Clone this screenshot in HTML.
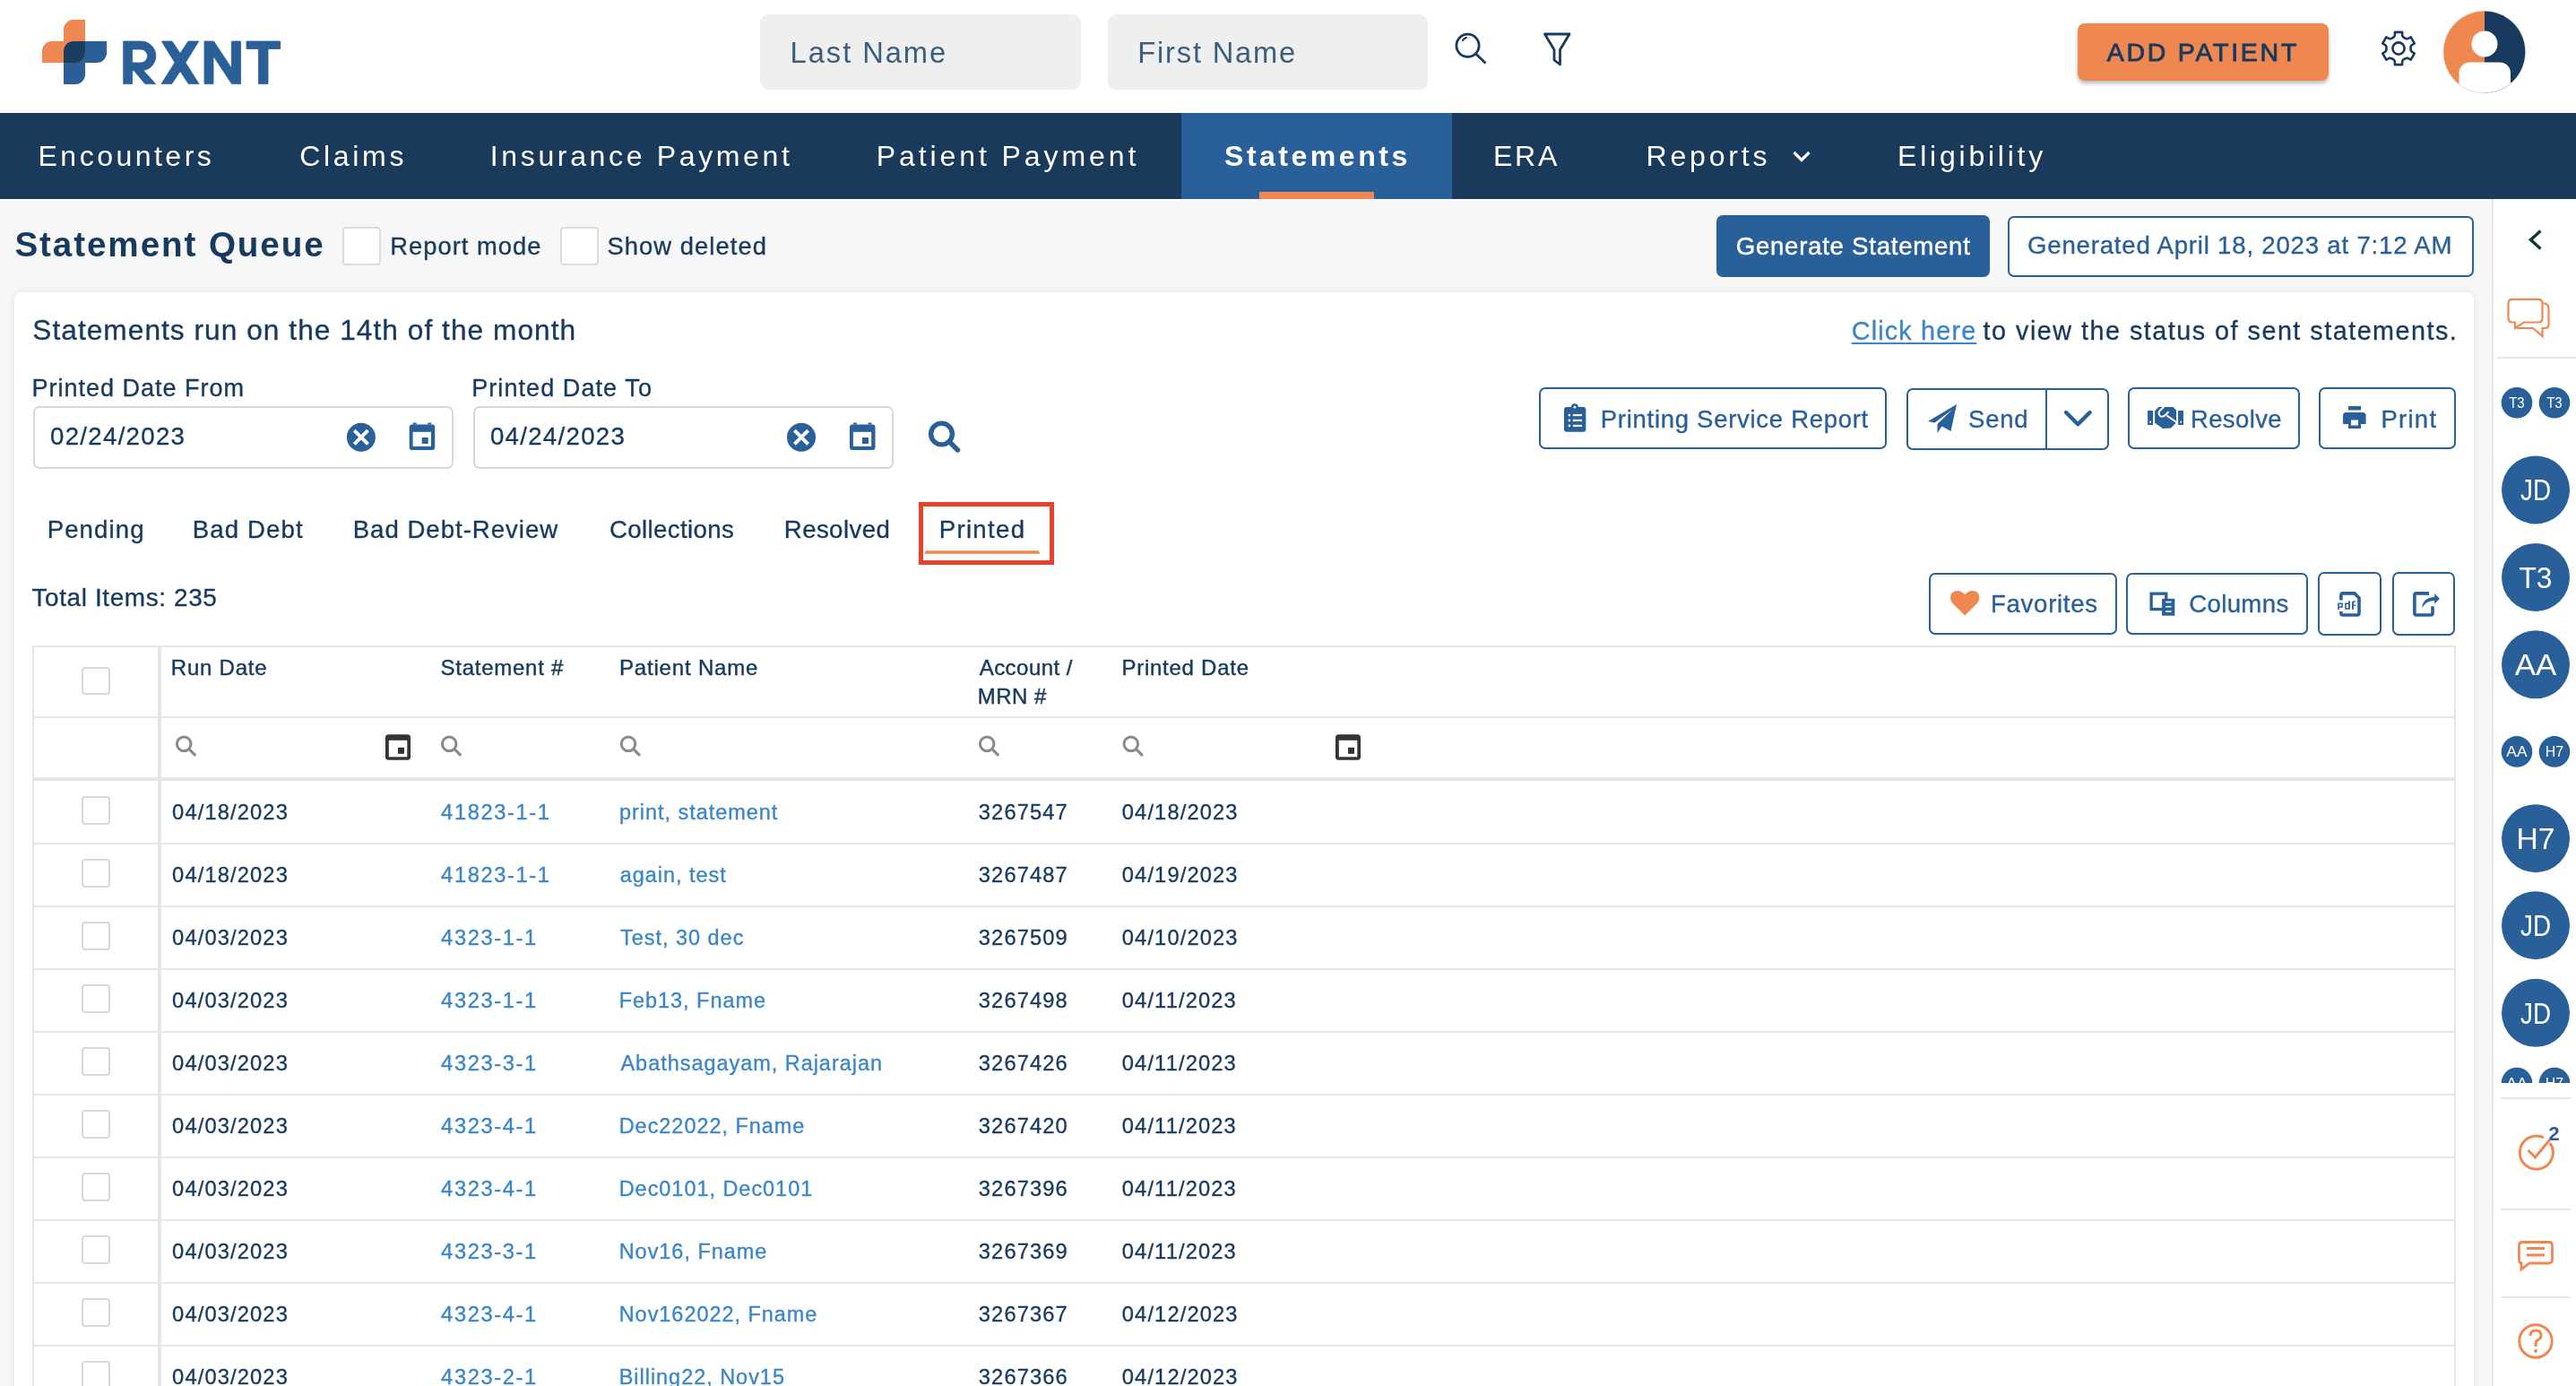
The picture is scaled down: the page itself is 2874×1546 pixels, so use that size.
<!DOCTYPE html>
<html><head><meta charset="utf-8"><style>
html,body{margin:0;padding:0;}
body{width:2874px;height:1546px;overflow:hidden;position:relative;background:#fff;font-family:"Liberation Sans",sans-serif;}
.t{position:absolute;white-space:pre;line-height:1;}
#root{position:absolute;left:0;top:0;width:2874px;height:1546px;will-change:transform;}
div{position:absolute;}
svg{position:absolute;left:0;top:0;}
</style></head><body><div id="root">
<div style="position:absolute;left:848px;top:16px;width:358px;height:84px;background:#efefef;border-radius:9px;"></div>
<div style="position:absolute;left:1236px;top:16px;width:357px;height:84px;background:#efefef;border-radius:9px;"></div>
<div class="t" style="left:881.6px;top:42.5px;font-size:32.65px;color:#3b5e7e;letter-spacing:1.97px;/*nostroke*/">Last Name</div>
<div class="t" style="left:1269.2px;top:42.5px;font-size:32.65px;color:#3b5e7e;letter-spacing:1.83px;/*nostroke*/">First Name</div>
<div style="position:absolute;left:2318px;top:26px;width:280px;height:64px;background:#ef8751;border-radius:8px;box-shadow:0 3px 4px rgba(0,0,0,0.28);"></div>
<div class="t" style="left:2350.8px;top:43.9px;font-size:28.49px;color:#173a5e;letter-spacing:2.74px;-webkit-text-stroke:0.9px #173a5e;">ADD PATIENT</div>
<div style="position:absolute;left:0px;top:126px;width:2874px;height:96px;background:#193a5b;"></div>
<div style="position:absolute;left:1318px;top:126px;width:302px;height:96px;background:#2a6099;"></div>
<div style="position:absolute;left:1405px;top:214px;width:128px;height:8px;background:#ef8751;"></div>
<div class="t" style="left:42.5px;top:158.0px;font-size:32.09px;color:#ffffff;letter-spacing:3.45px;">Encounters</div>
<div class="t" style="left:334.3px;top:158.0px;font-size:32.09px;color:#ffffff;letter-spacing:3.63px;">Claims</div>
<div class="t" style="left:546.8px;top:158.0px;font-size:32.09px;color:#ffffff;letter-spacing:3.61px;">Insurance Payment</div>
<div class="t" style="left:977.8px;top:158.0px;font-size:32.09px;color:#ffffff;letter-spacing:3.87px;">Patient Payment</div>
<div class="t" style="left:1366.0px;top:158.0px;font-size:32.09px;color:#ffffff;font-weight:bold;letter-spacing:3.48px;">Statements</div>
<div class="t" style="left:1666.0px;top:158.0px;font-size:32.09px;color:#ffffff;letter-spacing:2.68px;">ERA</div>
<div class="t" style="left:1836.4px;top:158.0px;font-size:32.09px;color:#ffffff;letter-spacing:3.82px;">Reports</div>
<div class="t" style="left:2117.1px;top:158.0px;font-size:32.09px;color:#ffffff;letter-spacing:3.74px;">Eligibility</div>
<div style="position:absolute;left:0px;top:222px;width:2780px;height:1324px;background:#f7f7f7;z-index:-1;"></div>
<div style="position:absolute;left:2780px;top:222px;width:2px;height:1324px;background:#e6e6e6;"></div>
<div style="position:absolute;left:2782px;top:222px;width:92px;height:1324px;background:#fff;"></div>
<div class="t" style="left:16.4px;top:253.9px;font-size:38.66px;color:#173a5e;font-weight:bold;letter-spacing:1.89px;">Statement Queue</div>
<div style="position:absolute;left:382px;top:253px;width:43px;height:43px;background:#fff;border:2px solid #dcdcdc;border-radius:4px;box-sizing:border-box;"></div>
<div class="t" style="left:435.2px;top:261.4px;font-size:27.35px;color:#173a5e;-webkit-text-stroke:0.35px #173a5e;letter-spacing:1.03px;">Report mode</div>
<div style="position:absolute;left:625px;top:253px;width:43px;height:43px;background:#fff;border:2px solid #dcdcdc;border-radius:4px;box-sizing:border-box;"></div>
<div class="t" style="left:677.5px;top:261.4px;font-size:27.35px;color:#173a5e;-webkit-text-stroke:0.35px #173a5e;letter-spacing:1.06px;">Show deleted</div>
<div style="position:absolute;left:1915px;top:240px;width:305px;height:69px;background:#2a6099;border-radius:7px;"></div>
<div class="t" style="left:1936.7px;top:260.6px;font-size:27.63px;color:#fff;letter-spacing:0.73px;-webkit-text-stroke:0.45px #fff;">Generate Statement</div>
<div style="position:absolute;left:2240px;top:240.5px;width:520px;height:68px;background:#fff;border:2px solid #2a6099;border-radius:7px;box-sizing:border-box;"></div>
<div class="t" style="left:2262.0px;top:260.3px;font-size:27.63px;color:#2a6099;-webkit-text-stroke:0.35px #2a6099;letter-spacing:0.78px;">Generated April 18, 2023 at 7:12 AM</div>
<div style="position:absolute;left:16px;top:326px;width:2744px;height:1300px;background:#fff;border-radius:8px;box-shadow:0 0 10px rgba(0,0,0,0.09);"></div>
<div class="t" style="left:36.3px;top:352.9px;font-size:31.67px;color:#173a5e;-webkit-text-stroke:0.35px #173a5e;letter-spacing:1.03px;">Statements run on the 14th of the month</div>
<div class="t" style="left:2065.7px;top:354.7px;font-size:28.74px;color:#3a86c8;-webkit-text-stroke:0.35px #3a86c8;letter-spacing:1.19px;text-decoration:underline;text-decoration-thickness:2px;text-underline-offset:3px;">Click here</div>
<div class="t" style="left:2212.6px;top:354.7px;font-size:28.74px;color:#173a5e;-webkit-text-stroke:0.35px #173a5e;letter-spacing:1.50px;">to view the status of sent statements.</div>
<div class="t" style="left:35.4px;top:418.8px;font-size:27.07px;color:#173a5e;-webkit-text-stroke:0.35px #173a5e;letter-spacing:0.98px;">Printed Date From</div>
<div class="t" style="left:526.2px;top:418.8px;font-size:27.07px;color:#173a5e;-webkit-text-stroke:0.35px #173a5e;letter-spacing:1.05px;">Printed Date To</div>
<div style="position:absolute;left:36.5px;top:452.5px;width:469.7px;height:70.5px;background:#fff;border:2px solid #d8d8d8;border-radius:7px;box-sizing:border-box;"></div>
<div class="t" style="left:56.0px;top:473.1px;font-size:27.63px;color:#173a5e;-webkit-text-stroke:0.35px #173a5e;letter-spacing:1.30px;">02/24/2023</div>
<div style="position:absolute;left:527.9px;top:452.5px;width:469.30000000000007px;height:70.5px;background:#fff;border:2px solid #d8d8d8;border-radius:7px;box-sizing:border-box;"></div>
<div class="t" style="left:546.9px;top:473.1px;font-size:27.63px;color:#173a5e;-webkit-text-stroke:0.35px #173a5e;letter-spacing:1.30px;">04/24/2023</div>
<div style="position:absolute;left:1717.4px;top:432.3px;width:387.9000000000001px;height:69.19999999999999px;background:#fff;border:2px solid #2a6099;border-radius:7px;box-sizing:border-box;"></div>
<div class="t" style="left:1785.8px;top:453.6px;font-size:27.49px;color:#2a6099;-webkit-text-stroke:0.35px #2a6099;letter-spacing:0.72px;">Printing Service Report</div>
<div style="position:absolute;left:2126.6px;top:433.3px;width:226.70000000000027px;height:69.19999999999999px;background:#fff;border:2px solid #2a6099;border-radius:7px;box-sizing:border-box;"></div>
<div style="position:absolute;left:2282px;top:433.3px;width:2px;height:69.2px;background:#2a6099;"></div>
<div class="t" style="left:2196.1px;top:453.6px;font-size:27.49px;color:#2a6099;-webkit-text-stroke:0.35px #2a6099;letter-spacing:0.73px;">Send</div>
<div style="position:absolute;left:2374.2px;top:432.2px;width:192.30000000000018px;height:69.30000000000001px;background:#fff;border:2px solid #2a6099;border-radius:7px;box-sizing:border-box;"></div>
<div class="t" style="left:2443.9px;top:453.6px;font-size:27.49px;color:#2a6099;-webkit-text-stroke:0.35px #2a6099;letter-spacing:0.41px;">Resolve</div>
<div style="position:absolute;left:2587px;top:432.2px;width:152.80000000000018px;height:69.30000000000001px;background:#fff;border:2px solid #2a6099;border-radius:7px;box-sizing:border-box;"></div>
<div class="t" style="left:2656.4px;top:453.6px;font-size:27.49px;color:#2a6099;-webkit-text-stroke:0.35px #2a6099;letter-spacing:1.28px;">Print</div>
<div class="t" style="left:52.7px;top:577.3px;font-size:27.63px;color:#173a5e;-webkit-text-stroke:0.35px #173a5e;letter-spacing:1.07px;">Pending</div>
<div class="t" style="left:214.8px;top:577.3px;font-size:27.63px;color:#173a5e;-webkit-text-stroke:0.35px #173a5e;letter-spacing:1.10px;">Bad Debt</div>
<div class="t" style="left:393.7px;top:577.3px;font-size:27.63px;color:#173a5e;-webkit-text-stroke:0.35px #173a5e;letter-spacing:0.97px;">Bad Debt-Review</div>
<div class="t" style="left:679.9px;top:577.3px;font-size:27.63px;color:#173a5e;-webkit-text-stroke:0.35px #173a5e;letter-spacing:0.38px;">Collections</div>
<div class="t" style="left:874.8px;top:577.3px;font-size:27.63px;color:#173a5e;-webkit-text-stroke:0.35px #173a5e;letter-spacing:0.40px;">Resolved</div>
<div class="t" style="left:1047.7px;top:577.3px;font-size:27.63px;color:#173a5e;-webkit-text-stroke:0.35px #173a5e;letter-spacing:1.30px;">Printed</div>
<div style="position:absolute;left:1025.2px;top:559.9px;width:150.6px;height:69.7px;border:5px solid #e8412a;box-sizing:border-box;"></div>
<div class="t" style="left:35.5px;top:653.1px;font-size:27.91px;color:#173a5e;-webkit-text-stroke:0.35px #173a5e;letter-spacing:0.62px;">Total Items: 235</div>
<div style="position:absolute;left:2152.4px;top:639.4px;width:209.19999999999982px;height:68.89999999999998px;background:#fff;border:2px solid #2a6099;border-radius:7px;box-sizing:border-box;"></div>
<div class="t" style="left:2221.0px;top:660.0px;font-size:27.63px;color:#2a6099;-webkit-text-stroke:0.35px #2a6099;letter-spacing:0.68px;">Favorites</div>
<div style="position:absolute;left:2372.2px;top:639.4px;width:202.5px;height:68.89999999999998px;background:#fff;border:2px solid #2a6099;border-radius:7px;box-sizing:border-box;"></div>
<div class="t" style="left:2442.2px;top:660.0px;font-size:27.63px;color:#2a6099;-webkit-text-stroke:0.35px #2a6099;letter-spacing:0.34px;">Columns</div>
<div style="position:absolute;left:2586.4px;top:638.2px;width:70.79999999999973px;height:70.79999999999995px;background:#fff;border:2px solid #2a6099;border-radius:7px;box-sizing:border-box;"></div>
<div style="position:absolute;left:2668.6px;top:638.2px;width:70.80000000000018px;height:70.79999999999995px;background:#fff;border:2px solid #2a6099;border-radius:7px;box-sizing:border-box;"></div>
<div style="position:absolute;left:36px;top:720px;width:2704px;height:826px;background:#fff;border:2px solid #e6e6e6;border-bottom:none;box-sizing:border-box;"></div>
<div style="position:absolute;left:176px;top:720px;width:4px;height:826px;background:#e6e6e6;"></div>
<div style="position:absolute;left:36px;top:799px;width:2704px;height:2px;background:#e6e6e6;"></div>
<div style="position:absolute;left:36px;top:867px;width:2704px;height:4px;background:#e6e6e6;"></div>
<div style="position:absolute;left:36px;top:940px;width:2704px;height:2px;background:#e6e6e6;"></div>
<div style="position:absolute;left:36px;top:1010px;width:2704px;height:2px;background:#e6e6e6;"></div>
<div style="position:absolute;left:36px;top:1080px;width:2704px;height:2px;background:#e6e6e6;"></div>
<div style="position:absolute;left:36px;top:1150px;width:2704px;height:2px;background:#e6e6e6;"></div>
<div style="position:absolute;left:36px;top:1220px;width:2704px;height:2px;background:#e6e6e6;"></div>
<div style="position:absolute;left:36px;top:1290px;width:2704px;height:2px;background:#e6e6e6;"></div>
<div style="position:absolute;left:36px;top:1360px;width:2704px;height:2px;background:#e6e6e6;"></div>
<div style="position:absolute;left:36px;top:1430px;width:2704px;height:2px;background:#e6e6e6;"></div>
<div style="position:absolute;left:36px;top:1500px;width:2704px;height:2px;background:#e6e6e6;"></div>
<div style="position:absolute;left:91.4px;top:743.5px;width:31.2px;height:31.2px;background:#fff;border:2px solid #d9d9d9;border-radius:4px;box-sizing:border-box;"></div>
<div class="t" style="left:190.8px;top:732.9px;font-size:24.00px;color:#173a5e;letter-spacing:0.77px;-webkit-text-stroke:0.45px #173a5e;">Run Date</div>
<div class="t" style="left:491.6px;top:732.9px;font-size:24.00px;color:#173a5e;letter-spacing:0.73px;-webkit-text-stroke:0.45px #173a5e;">Statement #</div>
<div class="t" style="left:690.9px;top:732.9px;font-size:24.00px;color:#173a5e;letter-spacing:0.83px;-webkit-text-stroke:0.45px #173a5e;">Patient Name</div>
<div class="t" style="left:1092.7px;top:732.9px;font-size:24.00px;color:#173a5e;letter-spacing:0.46px;-webkit-text-stroke:0.45px #173a5e;">Account /</div>
<div class="t" style="left:1090.8px;top:764.9px;font-size:24.00px;color:#173a5e;letter-spacing:0.49px;-webkit-text-stroke:0.45px #173a5e;">MRN #</div>
<div class="t" style="left:1251.4px;top:732.9px;font-size:24.00px;color:#173a5e;letter-spacing:0.75px;-webkit-text-stroke:0.45px #173a5e;">Printed Date</div>
<div style="position:absolute;left:91.4px;top:888.4px;width:31.2px;height:31.2px;background:#fff;border:2px solid #d9d9d9;border-radius:4px;box-sizing:border-box;"></div>
<div class="t" style="left:192.1px;top:894.7px;font-size:23.69px;color:#173a5e;-webkit-text-stroke:0.35px #173a5e;letter-spacing:1.13px;">04/18/2023</div>
<div class="t" style="left:492.1px;top:894.7px;font-size:23.69px;color:#3a86c8;-webkit-text-stroke:0.35px #3a86c8;letter-spacing:1.62px;">41823-1-1</div>
<div class="t" style="left:691.0px;top:894.9px;font-size:23.44px;color:#3a86c8;-webkit-text-stroke:0.35px #3a86c8;letter-spacing:0.99px;">print, statement</div>
<div class="t" style="left:1091.8px;top:894.7px;font-size:23.69px;color:#173a5e;-webkit-text-stroke:0.35px #173a5e;letter-spacing:1.13px;">3267547</div>
<div class="t" style="left:1251.8px;top:894.7px;font-size:23.69px;color:#173a5e;-webkit-text-stroke:0.35px #173a5e;letter-spacing:1.13px;">04/18/2023</div>
<div style="position:absolute;left:91.4px;top:958.4px;width:31.2px;height:31.2px;background:#fff;border:2px solid #d9d9d9;border-radius:4px;box-sizing:border-box;"></div>
<div class="t" style="left:192.1px;top:964.7px;font-size:23.69px;color:#173a5e;-webkit-text-stroke:0.35px #173a5e;letter-spacing:1.13px;">04/18/2023</div>
<div class="t" style="left:492.1px;top:964.7px;font-size:23.69px;color:#3a86c8;-webkit-text-stroke:0.35px #3a86c8;letter-spacing:1.62px;">41823-1-1</div>
<div class="t" style="left:691.8px;top:964.9px;font-size:23.44px;color:#3a86c8;-webkit-text-stroke:0.35px #3a86c8;letter-spacing:0.99px;">again, test</div>
<div class="t" style="left:1091.8px;top:964.7px;font-size:23.69px;color:#173a5e;-webkit-text-stroke:0.35px #173a5e;letter-spacing:1.13px;">3267487</div>
<div class="t" style="left:1251.8px;top:964.7px;font-size:23.69px;color:#173a5e;-webkit-text-stroke:0.35px #173a5e;letter-spacing:1.13px;">04/19/2023</div>
<div style="position:absolute;left:91.4px;top:1028.4px;width:31.2px;height:31.2px;background:#fff;border:2px solid #d9d9d9;border-radius:4px;box-sizing:border-box;"></div>
<div class="t" style="left:192.1px;top:1034.7px;font-size:23.69px;color:#173a5e;-webkit-text-stroke:0.35px #173a5e;letter-spacing:1.13px;">04/03/2023</div>
<div class="t" style="left:492.1px;top:1034.7px;font-size:23.69px;color:#3a86c8;-webkit-text-stroke:0.35px #3a86c8;letter-spacing:1.62px;">4323-1-1</div>
<div class="t" style="left:692.1px;top:1034.9px;font-size:23.44px;color:#3a86c8;-webkit-text-stroke:0.35px #3a86c8;letter-spacing:0.99px;">Test, 30 dec</div>
<div class="t" style="left:1091.8px;top:1034.7px;font-size:23.69px;color:#173a5e;-webkit-text-stroke:0.35px #173a5e;letter-spacing:1.13px;">3267509</div>
<div class="t" style="left:1251.8px;top:1034.7px;font-size:23.69px;color:#173a5e;-webkit-text-stroke:0.35px #173a5e;letter-spacing:1.13px;">04/10/2023</div>
<div style="position:absolute;left:91.4px;top:1098.4px;width:31.2px;height:31.2px;background:#fff;border:2px solid #d9d9d9;border-radius:4px;box-sizing:border-box;"></div>
<div class="t" style="left:192.1px;top:1104.7px;font-size:23.69px;color:#173a5e;-webkit-text-stroke:0.35px #173a5e;letter-spacing:1.13px;">04/03/2023</div>
<div class="t" style="left:492.1px;top:1104.7px;font-size:23.69px;color:#3a86c8;-webkit-text-stroke:0.35px #3a86c8;letter-spacing:1.62px;">4323-1-1</div>
<div class="t" style="left:690.7px;top:1104.9px;font-size:23.44px;color:#3a86c8;-webkit-text-stroke:0.35px #3a86c8;letter-spacing:0.99px;">Feb13, Fname</div>
<div class="t" style="left:1091.8px;top:1104.7px;font-size:23.69px;color:#173a5e;-webkit-text-stroke:0.35px #173a5e;letter-spacing:1.13px;">3267498</div>
<div class="t" style="left:1251.8px;top:1104.7px;font-size:23.69px;color:#173a5e;-webkit-text-stroke:0.35px #173a5e;letter-spacing:1.13px;">04/11/2023</div>
<div style="position:absolute;left:91.4px;top:1168.4px;width:31.2px;height:31.2px;background:#fff;border:2px solid #d9d9d9;border-radius:4px;box-sizing:border-box;"></div>
<div class="t" style="left:192.1px;top:1174.7px;font-size:23.69px;color:#173a5e;-webkit-text-stroke:0.35px #173a5e;letter-spacing:1.13px;">04/03/2023</div>
<div class="t" style="left:492.1px;top:1174.7px;font-size:23.69px;color:#3a86c8;-webkit-text-stroke:0.35px #3a86c8;letter-spacing:1.62px;">4323-3-1</div>
<div class="t" style="left:692.5px;top:1174.9px;font-size:23.44px;color:#3a86c8;-webkit-text-stroke:0.35px #3a86c8;letter-spacing:0.99px;">Abathsagayam, Rajarajan</div>
<div class="t" style="left:1091.8px;top:1174.7px;font-size:23.69px;color:#173a5e;-webkit-text-stroke:0.35px #173a5e;letter-spacing:1.13px;">3267426</div>
<div class="t" style="left:1251.8px;top:1174.7px;font-size:23.69px;color:#173a5e;-webkit-text-stroke:0.35px #173a5e;letter-spacing:1.13px;">04/11/2023</div>
<div style="position:absolute;left:91.4px;top:1238.4px;width:31.2px;height:31.2px;background:#fff;border:2px solid #d9d9d9;border-radius:4px;box-sizing:border-box;"></div>
<div class="t" style="left:192.1px;top:1244.7px;font-size:23.69px;color:#173a5e;-webkit-text-stroke:0.35px #173a5e;letter-spacing:1.13px;">04/03/2023</div>
<div class="t" style="left:492.1px;top:1244.7px;font-size:23.69px;color:#3a86c8;-webkit-text-stroke:0.35px #3a86c8;letter-spacing:1.62px;">4323-4-1</div>
<div class="t" style="left:690.7px;top:1244.9px;font-size:23.44px;color:#3a86c8;-webkit-text-stroke:0.35px #3a86c8;letter-spacing:0.99px;">Dec22022, Fname</div>
<div class="t" style="left:1091.8px;top:1244.7px;font-size:23.69px;color:#173a5e;-webkit-text-stroke:0.35px #173a5e;letter-spacing:1.13px;">3267420</div>
<div class="t" style="left:1251.8px;top:1244.7px;font-size:23.69px;color:#173a5e;-webkit-text-stroke:0.35px #173a5e;letter-spacing:1.13px;">04/11/2023</div>
<div style="position:absolute;left:91.4px;top:1308.4px;width:31.2px;height:31.2px;background:#fff;border:2px solid #d9d9d9;border-radius:4px;box-sizing:border-box;"></div>
<div class="t" style="left:192.1px;top:1314.7px;font-size:23.69px;color:#173a5e;-webkit-text-stroke:0.35px #173a5e;letter-spacing:1.13px;">04/03/2023</div>
<div class="t" style="left:492.1px;top:1314.7px;font-size:23.69px;color:#3a86c8;-webkit-text-stroke:0.35px #3a86c8;letter-spacing:1.62px;">4323-4-1</div>
<div class="t" style="left:690.7px;top:1314.9px;font-size:23.44px;color:#3a86c8;-webkit-text-stroke:0.35px #3a86c8;letter-spacing:0.99px;">Dec0101, Dec0101</div>
<div class="t" style="left:1091.8px;top:1314.7px;font-size:23.69px;color:#173a5e;-webkit-text-stroke:0.35px #173a5e;letter-spacing:1.13px;">3267396</div>
<div class="t" style="left:1251.8px;top:1314.7px;font-size:23.69px;color:#173a5e;-webkit-text-stroke:0.35px #173a5e;letter-spacing:1.13px;">04/11/2023</div>
<div style="position:absolute;left:91.4px;top:1378.4px;width:31.2px;height:31.2px;background:#fff;border:2px solid #d9d9d9;border-radius:4px;box-sizing:border-box;"></div>
<div class="t" style="left:192.1px;top:1384.7px;font-size:23.69px;color:#173a5e;-webkit-text-stroke:0.35px #173a5e;letter-spacing:1.13px;">04/03/2023</div>
<div class="t" style="left:492.1px;top:1384.7px;font-size:23.69px;color:#3a86c8;-webkit-text-stroke:0.35px #3a86c8;letter-spacing:1.62px;">4323-3-1</div>
<div class="t" style="left:690.7px;top:1384.9px;font-size:23.44px;color:#3a86c8;-webkit-text-stroke:0.35px #3a86c8;letter-spacing:0.99px;">Nov16, Fname</div>
<div class="t" style="left:1091.8px;top:1384.7px;font-size:23.69px;color:#173a5e;-webkit-text-stroke:0.35px #173a5e;letter-spacing:1.13px;">3267369</div>
<div class="t" style="left:1251.8px;top:1384.7px;font-size:23.69px;color:#173a5e;-webkit-text-stroke:0.35px #173a5e;letter-spacing:1.13px;">04/11/2023</div>
<div style="position:absolute;left:91.4px;top:1448.4px;width:31.2px;height:31.2px;background:#fff;border:2px solid #d9d9d9;border-radius:4px;box-sizing:border-box;"></div>
<div class="t" style="left:192.1px;top:1454.7px;font-size:23.69px;color:#173a5e;-webkit-text-stroke:0.35px #173a5e;letter-spacing:1.13px;">04/03/2023</div>
<div class="t" style="left:492.1px;top:1454.7px;font-size:23.69px;color:#3a86c8;-webkit-text-stroke:0.35px #3a86c8;letter-spacing:1.62px;">4323-4-1</div>
<div class="t" style="left:690.7px;top:1454.9px;font-size:23.44px;color:#3a86c8;-webkit-text-stroke:0.35px #3a86c8;letter-spacing:0.99px;">Nov162022, Fname</div>
<div class="t" style="left:1091.8px;top:1454.7px;font-size:23.69px;color:#173a5e;-webkit-text-stroke:0.35px #173a5e;letter-spacing:1.13px;">3267367</div>
<div class="t" style="left:1251.8px;top:1454.7px;font-size:23.69px;color:#173a5e;-webkit-text-stroke:0.35px #173a5e;letter-spacing:1.13px;">04/12/2023</div>
<div style="position:absolute;left:91.4px;top:1518.4px;width:31.2px;height:31.2px;background:#fff;border:2px solid #d9d9d9;border-radius:4px;box-sizing:border-box;"></div>
<div class="t" style="left:192.1px;top:1524.7px;font-size:23.69px;color:#173a5e;-webkit-text-stroke:0.35px #173a5e;letter-spacing:1.13px;">04/03/2023</div>
<div class="t" style="left:492.1px;top:1524.7px;font-size:23.69px;color:#3a86c8;-webkit-text-stroke:0.35px #3a86c8;letter-spacing:1.62px;">4323-2-1</div>
<div class="t" style="left:690.7px;top:1524.9px;font-size:23.44px;color:#3a86c8;-webkit-text-stroke:0.35px #3a86c8;letter-spacing:0.99px;">Billing22, Nov15</div>
<div class="t" style="left:1091.8px;top:1524.7px;font-size:23.69px;color:#173a5e;-webkit-text-stroke:0.35px #173a5e;letter-spacing:1.13px;">3267366</div>
<div class="t" style="left:1251.8px;top:1524.7px;font-size:23.69px;color:#173a5e;-webkit-text-stroke:0.35px #173a5e;letter-spacing:1.13px;">04/12/2023</div>
<div style="position:absolute;left:2786px;top:398px;width:88px;height:2px;background:#e6e6e6;"></div>
<div style="position:absolute;left:2790px;top:1224px;width:78px;height:2px;background:#e6e6e6;"></div>
<div style="position:absolute;left:2790px;top:1348px;width:78px;height:2px;background:#e6e6e6;"></div>
<div style="position:absolute;left:2790px;top:1446px;width:78px;height:2px;background:#e6e6e6;"></div>
<div class="t" style="left:2843.2px;top:1254.1px;font-size:22.33px;color:#2a6099;font-weight:bold;">2</div>
<svg width="2874" height="1546" viewBox="0 0 2874 1546">
<path d="M71,46 H119 V59 A11,11 0 0 1 108,70 H95 V83 A11,11 0 0 1 84,94 H71 V57 A11,11 0 0 1 82,46 Z" fill="#2b5f98"/>
<path d="M47,70 V57 A11,11 0 0 1 58,46 H71 V33 A11,11 0 0 1 82,22 H95 V59 A11,11 0 0 1 84,70 Z" fill="#ef8751"/>
<path d="M71,57 A11,11 0 0 1 82,46 H95 V59 A11,11 0 0 1 84,70 H71 Z" fill="#1b3d60"/>
<path d="M137.7,93.6 V46 H157.5 A16.4,16.4 0 0 1 160,78.6 L173.6,93.6 H161.8 L149.5,78.8 H147.6 V93.6 Z M147.6,55 V70 H157 A7.5,7.5 0 0 0 157,55 Z" fill="#2b5f98" fill-rule="evenodd" stroke="#2b5f98" stroke-width="0.8" stroke-linejoin="round"/>
<path d="M180.3,46 H192 L201,59.5 L210,46 H221.8 L207,69.8 L222,93.6 H210.3 L201,79.5 L191.7,93.6 H180 L195,69.8 Z" fill="#2b5f98" stroke="#2b5f98" stroke-width="0.8" stroke-linejoin="round"/>
<path d="M228,93.6 V46 H238.5 L258.3,76 V46 H268.5 V93.6 H258.5 L238,62.5 V93.6 Z" fill="#2b5f98" stroke="#2b5f98" stroke-width="0.8" stroke-linejoin="round"/>
<path d="M275,46 H312.7 V54.5 H299 V93.6 H288.5 V54.5 H275 Z" fill="#2b5f98" stroke="#2b5f98" stroke-width="0.8" stroke-linejoin="round"/>
<circle cx="1637.5" cy="50.8" r="12.6" fill="none" stroke="#173a5e" stroke-width="2.8"/>
<line x1="1646.5" y1="60" x2="1657.5" y2="70.5" stroke="#173a5e" stroke-width="2.8" stroke-linecap="butt"/>
<path d="M1632,45 A7,7 0 0 1 1636,42" fill="none" stroke="#173a5e" stroke-width="2.2" stroke-linecap="round"/>
<path d="M1723.5,38 H1751 L1740.5,55.5 V72 L1734,67 V55.5 Z" fill="none" stroke="#173a5e" stroke-width="2.8" stroke-linejoin="round"/>
<path d="M2671.73,40.04 L2671.97,35.84 L2680.03,35.84 L2680.27,40.04 L2681.53,41.58 L2682.80,42.22 L2683.99,43.00 L2685.96,43.32 L2689.71,41.43 L2693.74,48.41 L2690.23,50.72 L2689.53,52.58 L2689.60,54.00 L2689.53,55.42 L2690.23,57.28 L2693.74,59.59 L2689.71,66.57 L2685.96,64.68 L2683.99,65.00 L2682.80,65.78 L2681.53,66.42 L2680.27,67.96 L2680.03,72.16 L2671.97,72.16 L2671.73,67.96 L2670.47,66.42 L2669.20,65.78 L2668.01,65.00 L2666.04,64.68 L2662.29,66.57 L2658.26,59.59 L2661.77,57.28 L2662.47,55.42 L2662.40,54.00 L2662.47,52.58 L2661.77,50.72 L2658.26,48.41 L2662.29,41.43 L2666.04,43.32 L2668.01,43.00 L2669.20,42.22 L2670.47,41.58 Z" fill="none" stroke="#173a5e" stroke-width="2.6" stroke-linejoin="round"/>
<circle cx="2676" cy="54" r="6.6" fill="none" stroke="#173a5e" stroke-width="2.6"/>
<defs><clipPath id="av"><circle cx="2771.8" cy="58" r="45.5"/></clipPath></defs>
<circle cx="2771.8" cy="58" r="46.5" fill="#e8e8e8"/>
<g clip-path="url(#av)"><rect x="2720" y="0" width="52" height="120" fill="#ef8751"/><rect x="2772" y="0" width="60" height="120" fill="#173a5e"/><circle cx="2772" cy="49" r="14.5" fill="#fff"/><rect x="2743.5" y="69.5" width="57.5" height="60" rx="12" fill="#fff"/></g>
<path d="M2001.5,170 L2010,178.5 L2018.5,170" fill="none" stroke="#fff" stroke-width="3.2"/>
<circle cx="402.9" cy="487.7" r="16" fill="#2a6099"/>
<path d="M395.29999999999995,480.1 L410.5,495.3 M410.5,480.1 L395.29999999999995,495.3" stroke="#fff" stroke-width="4"/>
<rect x="456.7" y="473.5" width="28.5" height="28.5" rx="3" fill="#2a6099"/>
<rect x="460.59999999999997" y="481.8" width="20.3" height="16.1" fill="#fff"/>
<rect x="470.7" y="488" width="7" height="7" fill="#2a6099"/>
<rect x="460.7" y="471.5" width="4" height="2" fill="#2a6099"/><rect x="477.2" y="471.5" width="4" height="2" fill="#2a6099"/>
<circle cx="894" cy="487.7" r="16" fill="#2a6099"/>
<path d="M886.4,480.1 L901.6,495.3 M901.6,480.1 L886.4,495.3" stroke="#fff" stroke-width="4"/>
<rect x="948" y="473.5" width="28.5" height="28.5" rx="3" fill="#2a6099"/>
<rect x="951.9" y="481.8" width="20.3" height="16.1" fill="#fff"/>
<rect x="962" y="488" width="7" height="7" fill="#2a6099"/>
<rect x="952" y="471.5" width="4" height="2" fill="#2a6099"/><rect x="968.5" y="471.5" width="4" height="2" fill="#2a6099"/>
<circle cx="1050.5" cy="484" r="11.9" fill="none" stroke="#2a6099" stroke-width="5.4"/>
<line x1="1059" y1="492.5" x2="1068.5" y2="502" stroke="#2a6099" stroke-width="5.4" stroke-linecap="round"/>
<path d="M2305,460 L2318.3,473.3 L2331.6,460" fill="none" stroke="#2a6099" stroke-width="4.4" stroke-linecap="round" stroke-linejoin="round"/>
<rect x="1745" y="454.1" width="24.3" height="27.6" rx="3" fill="#2a6099"/>
<circle cx="1756.9" cy="454.2" r="4" fill="#2a6099"/><circle cx="1756.9" cy="454.2" r="1.4" fill="#fff"/>
<circle cx="1750.9" cy="463.05" r="1.35" fill="#fff"/><rect x="1754.9" y="461.95" width="10.1" height="2.2" fill="#fff"/>
<circle cx="1750.9" cy="468.95" r="1.35" fill="#fff"/><rect x="1754.9" y="467.84999999999997" width="10.1" height="2.2" fill="#fff"/>
<circle cx="1750.9" cy="474.9" r="1.35" fill="#fff"/><rect x="1754.9" y="473.79999999999995" width="10.1" height="2.2" fill="#fff"/>
<path d="M2151,470 L2183,451 L2176.5,481 L2166.5,475.5 L2161.5,483 L2161.5,473 L2178,457 L2158.5,471.5 Z" fill="#2a6099"/>
<path d="M2396.1,458.1 H2402 V473.9 H2396.1 Z M2430.1,458.1 H2436 V473.9 H2430.1 Z" fill="#2a6099"/>
<rect x="2398.2" y="469.8" width="1.8" height="1.8" fill="#fff"/><rect x="2432.3" y="469.8" width="1.8" height="1.8" fill="#fff"/>
<path d="M2404.1,458.2 L2408.4,454.1 H2424.5 L2428.1,457.7 V469.5 L2427,472.5 L2422,477.5 L2413,477.9 L2404.1,471.7 Z" fill="#2a6099"/>
<path d="M2414.2,453.8 L2409.6,458.2 Q2407.4,461 2409.6,463.6 Q2411.8,465.8 2414.6,463.9 L2419.6,459.3 M2417.3,463.4 L2428.3,471" fill="none" stroke="#fff" stroke-width="1.9"/>
<rect x="2620" y="453" width="14" height="4.5" fill="#2a6099"/>
<path d="M2614,463.5 Q2614,460 2617.5,460 H2636 Q2639.6,460 2639.6,463.5 V473 H2634 V478 H2620 V473 H2614 Z" fill="#2a6099"/>
<rect x="2623" y="468.5" width="8" height="6" fill="#fff"/>
<path d="M1033,614.2 H1158.5 L1160.5,617.8 H1031.2 Z" fill="#ef8751"/>
<path d="M2192.2,686.6 L2178.5,673 Q2176,670 2176,666.5 Q2176,659 2184,659 Q2189,659 2192.2,663.5 Q2195.4,659 2200.4,659 Q2208.3,659 2208.3,666.5 Q2208.3,670 2205.8,673 Z" fill="#ef8751"/>
<rect x="2400.15" y="662.15" width="16.6" height="17.4" fill="none" stroke="#2a6099" stroke-width="3.3"/>
<rect x="2412.1" y="667.8" width="14.2" height="18.9" fill="#2a6099"/>
<rect x="2416" y="670.7" width="6.6" height="1.6" fill="#fff"/>
<rect x="2416" y="675.9000000000001" width="6.6" height="1.6" fill="#fff"/>
<rect x="2416" y="681.2" width="6.6" height="1.6" fill="#fff"/>
<path d="M2611.9,669.6 V663.8 Q2611.9,661.9 2613.8,661.9 H2627 L2632,666.9 V684 Q2632,686 2630,686 H2613.8 Q2611.9,686 2611.9,684 V682" fill="none" stroke="#2a6099" stroke-width="3.6"/>
<path d="M2608.2,672.5 H2613.8 V677.8 H2609.8 V680 H2608.2 Z M2609.8,674 V676.3 H2612.2 V674 Z" fill="#2a6099" fill-rule="evenodd"/>
<path d="M2616.2,672.5 H2620 V670.2 H2621.9 V679.8 H2616.2 Z M2617.8,674 V678.3 H2620 V674 Z" fill="#2a6099" fill-rule="evenodd"/>
<path d="M2624,679.8 V672 Q2624,670.2 2626,670.2 H2627.8 V671.7 H2625.9 V674.5 H2628 V676 H2625.9 V679.8 Z" fill="#2a6099"/>
<path d="M2709.8,661.9 H2695.8 Q2693.9,661.9 2693.9,663.8 V684 Q2693.9,686 2695.8,686 H2712 Q2714,686 2714,684 V676.2" fill="none" stroke="#2a6099" stroke-width="3.6"/>
<path d="M2709.8,660.1 L2706,663.7 H2709.8 Z" fill="#2a6099"/>
<path d="M2702.3,678 Q2703,666.6 2716.2,666.1 V662 L2721.8,667.8 L2716.2,673.8 V670.1 Q2706.5,670.2 2702.3,678 Z" fill="#2a6099"/>
<circle cx="205.2" cy="829.8" r="7.8" fill="none" stroke="#8a8a8a" stroke-width="3"/>
<line x1="210.7" y1="835.3" x2="218.2" y2="842.8" stroke="#8a8a8a" stroke-width="3.2"/>
<circle cx="501.2" cy="829.8" r="7.8" fill="none" stroke="#8a8a8a" stroke-width="3"/>
<line x1="506.7" y1="835.3" x2="514.2" y2="842.8" stroke="#8a8a8a" stroke-width="3.2"/>
<circle cx="701.0" cy="829.8" r="7.8" fill="none" stroke="#8a8a8a" stroke-width="3"/>
<line x1="706.5" y1="835.3" x2="714.0" y2="842.8" stroke="#8a8a8a" stroke-width="3.2"/>
<circle cx="1101.2" cy="829.8" r="7.8" fill="none" stroke="#8a8a8a" stroke-width="3"/>
<line x1="1106.7" y1="835.3" x2="1114.2" y2="842.8" stroke="#8a8a8a" stroke-width="3.2"/>
<circle cx="1261.8" cy="829.8" r="7.8" fill="none" stroke="#8a8a8a" stroke-width="3"/>
<line x1="1267.3" y1="835.3" x2="1274.8" y2="842.8" stroke="#8a8a8a" stroke-width="3.2"/>
<rect x="430" y="819.3" width="28" height="28.5" rx="3.5" fill="#333333"/>
<rect x="433.8" y="825.8" width="20.5" height="18.5" fill="#fff"/>
<rect x="444" y="833.8" width="7" height="7" fill="#333333"/>
<rect x="1490" y="819.3" width="28" height="28.5" rx="3.5" fill="#333333"/>
<rect x="1493.8" y="825.8" width="20.5" height="18.5" fill="#fff"/>
<rect x="1504" y="833.8" width="7" height="7" fill="#333333"/>
<path d="M2834.5,257.5 L2823.5,267.5 L2834.5,277.5" fill="none" stroke="#0b3b2c" stroke-width="3.4"/>
<path d="M2803,333.8 H2832 Q2836.5,333.8 2836.5,338.3 V355 Q2836.5,359.5 2832,359.5 H2816 L2806,366 V359.5 H2803 Q2798.5,359.5 2798.5,355 V338.3 Q2798.5,333.8 2803,333.8 Z" fill="none" stroke="#ef8751" stroke-width="2.2"/>
<path d="M2837.5,338 Q2843.5,339 2843.5,344 V362 Q2843.5,366 2839,366 H2836.5 V375 L2826,366 H2808" fill="none" stroke="#ef8751" stroke-width="2.2"/>
<defs><clipPath id="avclip"><rect x="2782" y="400" width="92" height="808"/></clipPath></defs>
<g clip-path="url(#avclip)">
<circle cx="2808" cy="449.2" r="17.3" fill="#2a6099"/>
<text x="2799.2" y="454.7" font-family="Liberation Sans" font-size="16.0" fill="#fff" textLength="17.5" lengthAdjust="spacingAndGlyphs">T3</text>
<circle cx="2850" cy="449.2" r="17.3" fill="#2a6099"/>
<text x="2841.2" y="454.7" font-family="Liberation Sans" font-size="16.0" fill="#fff" textLength="17.5" lengthAdjust="spacingAndGlyphs">T3</text>
<circle cx="2829" cy="546.4" r="38" fill="#2a6099"/>
<text x="2812.0" y="558.0" font-family="Liberation Sans" font-size="33.9" fill="#fff" textLength="34" lengthAdjust="spacingAndGlyphs">JD</text>
<circle cx="2829" cy="643.9" r="38" fill="#2a6099"/>
<text x="2810.5" y="655.5" font-family="Liberation Sans" font-size="33.9" fill="#fff" textLength="37" lengthAdjust="spacingAndGlyphs">T3</text>
<circle cx="2829" cy="741.3" r="38" fill="#2a6099"/>
<text x="2805.7" y="752.9" font-family="Liberation Sans" font-size="33.9" fill="#fff" textLength="46.6" lengthAdjust="spacingAndGlyphs">AA</text>
<circle cx="2808" cy="838.4" r="17.3" fill="#2a6099"/>
<text x="2796.3" y="843.9" font-family="Liberation Sans" font-size="16.0" fill="#fff" textLength="23.3" lengthAdjust="spacingAndGlyphs">AA</text>
<circle cx="2850" cy="838.4" r="17.3" fill="#2a6099"/>
<text x="2839.8" y="843.9" font-family="Liberation Sans" font-size="16.0" fill="#fff" textLength="20.3" lengthAdjust="spacingAndGlyphs">H7</text>
<circle cx="2829" cy="935.2" r="38" fill="#2a6099"/>
<text x="2807.5" y="946.9" font-family="Liberation Sans" font-size="33.9" fill="#fff" textLength="43" lengthAdjust="spacingAndGlyphs">H7</text>
<circle cx="2829" cy="1032.2" r="38" fill="#2a6099"/>
<text x="2812.0" y="1043.9" font-family="Liberation Sans" font-size="33.9" fill="#fff" textLength="34" lengthAdjust="spacingAndGlyphs">JD</text>
<circle cx="2829" cy="1129.8" r="38" fill="#2a6099"/>
<text x="2812.0" y="1141.5" font-family="Liberation Sans" font-size="33.9" fill="#fff" textLength="34" lengthAdjust="spacingAndGlyphs">JD</text>
<circle cx="2808" cy="1208" r="17.3" fill="#2a6099"/>
<text x="2796.3" y="1213.5" font-family="Liberation Sans" font-size="16.0" fill="#fff" textLength="23.3" lengthAdjust="spacingAndGlyphs">AA</text>
<circle cx="2850" cy="1208" r="17.3" fill="#2a6099"/>
<text x="2839.8" y="1213.5" font-family="Liberation Sans" font-size="16.0" fill="#fff" textLength="20.3" lengthAdjust="spacingAndGlyphs">H7</text>
</g>
<path d="M2845,1275 A18.5,18.5 0 1 1 2838,1269" fill="none" stroke="#ef8751" stroke-width="3"/>
<path d="M2820.5,1283 L2828.5,1291 L2845,1271" fill="none" stroke="#ef8751" stroke-width="3"/>
<path d="M2814.5,1385.5 H2843.5 Q2847.5,1385.5 2847.5,1389.5 V1405 Q2847.5,1409 2843.5,1409 H2822 L2813,1416 V1409 Q2810.5,1409 2810.5,1405 V1389.5 Q2810.5,1385.5 2814.5,1385.5 Z" fill="none" stroke="#ef8751" stroke-width="2.8"/>
<path d="M2819,1392.5 H2839 M2819,1400 H2839" stroke="#ef8751" stroke-width="3"/>
<circle cx="2829" cy="1496" r="18.2" fill="none" stroke="#ef8751" stroke-width="2.9"/>
<path d="M2823,1490 Q2823,1484 2829,1484 Q2835,1484 2835,1489.5 Q2835,1493 2831,1495 Q2829,1496 2829,1499 V1502" fill="none" stroke="#ef8751" stroke-width="3"/>
<circle cx="2829" cy="1507" r="2" fill="#ef8751"/>
</svg>
</div></body></html>
